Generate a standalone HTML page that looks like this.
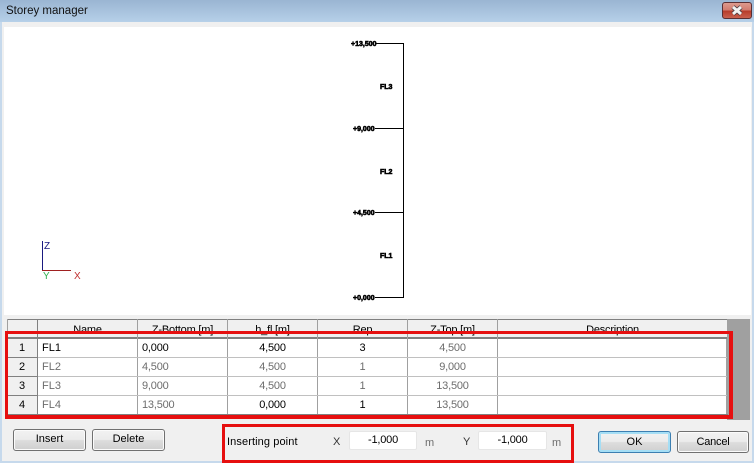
<!DOCTYPE html>
<html><head><meta charset="utf-8"><style>
html,body{margin:0;padding:0;background:#f0f0f0}
#w{position:relative;width:754px;height:463px;overflow:hidden;background:#f0f0f0;font-family:"Liberation Sans",sans-serif;font-size:11px;color:#000}
#w div{position:absolute;box-sizing:border-box}
.t{white-space:nowrap;line-height:14px}
.n{letter-spacing:-.2px}
.c{text-align:center}
.btn{border:1px solid #707070;border-radius:3px;background:linear-gradient(#f2f2f2 0,#ebebeb 48%,#dddddd 52%,#cfcfcf 100%);text-align:center;line-height:19px;box-shadow:inset 0 0 0 1px #fbfbfb}
.inp{background:#fff;border:1px solid #e6e6e6;border-radius:2px;height:19px;text-align:center;line-height:17px;width:68px}
.g{color:#6d6d6d}
.hl{background:#a0a0a0}
.hd{background:#f0f0f0}
</style></head><body><div id="w">
<div style="left:0;top:0;width:754px;height:22px;background:linear-gradient(#9ab5d2,#b6d0e8)"></div>
<div style="left:0;top:22px;width:2px;height:441px;background:#c6d9ec"></div>
<div style="left:752px;top:22px;width:2px;height:441px;background:#c6d9ec"></div>
<div style="left:0;top:461px;width:754px;height:2px;background:#c6d9ec"></div>
<div class="t" style="left:6px;top:4px;font-size:11.5px;color:#111">Storey manager</div>
<div style="left:722px;top:2px;width:30px;height:17px;border:1px solid #5a2f33;border-radius:3px;background:linear-gradient(#dd9a8e 0,#d27d70 45%,#b83d2c 55%,#c9604e 100%)"></div>
<svg style="position:absolute;left:722px;top:2px" width="30" height="17"><path d="M11 5L19 12M19 5L11 12" stroke="#4a3a40" stroke-width="4.500"/><path d="M11 5L19 12M19 5L11 12" stroke="#f2f2f2" stroke-width="3"/></svg>

<div style="left:4px;top:27px;width:747px;height:288px;background:#fff"></div>
<svg style="position:absolute;left:0;top:0" width="754" height="320">
<path d="M375 43.500H403.500V297.500H375M375 128.500H403.500M375 212.500H403.500" fill="none" stroke="#000" stroke-width="1"/>
<g font-family="Liberation Sans" font-weight="bold" font-size="7" fill="#000" stroke="#000" stroke-width=".6">
<text x="351" y="46">+13,500</text><text x="353" y="131">+9,000</text><text x="353" y="215">+4,500</text><text x="353" y="300">+0,000</text>
<text x="380" y="89">FL3</text><text x="380" y="174">FL2</text><text x="380" y="258">FL1</text></g>
<path d="M42.500 241V271" stroke="#1a1a80" stroke-width="1"/>
<path d="M42 270.500H71" stroke="#a02020" stroke-width="1"/>
<g font-family="Liberation Sans" font-size="10"><text x="44" y="249" fill="#1a1a80">Z</text><text x="43" y="279" fill="#30b050">Y</text><text x="74" y="279" fill="#c03030">X</text></g>
</svg>

<div style="left:727px;top:319px;width:23px;height:101px;background:#a0a0a0"></div>
<div style="left:7px;top:319px;width:720px;height:96px;background:#fff;border:1px solid #a0a0a0"></div>
<div class="hd" style="left:7px;top:319px;width:720px;height:19px;border-top:1px solid #808080"></div>
<div style="left:7px;top:338px;width:30px;height:76px;background:#f0f0f0"></div>
<div style="left:7px;top:337px;width:720px;height:2px;background:#808080"></div>
<div class="hl" style="left:7px;top:319px;width:1px;height:96px"></div>
<div style="left:37px;top:319px;width:1px;height:96px;background:#808080"></div>
<div class="hl" style="left:137px;top:319px;width:1px;height:95px"></div>
<div class="hl" style="left:227px;top:319px;width:1px;height:95px"></div>
<div class="hl" style="left:317px;top:319px;width:1px;height:95px"></div>
<div class="hl" style="left:407px;top:319px;width:1px;height:95px"></div>
<div class="hl" style="left:497px;top:319px;width:1px;height:95px"></div>
<div class="hl" style="left:727px;top:319px;width:1px;height:96px"></div>
<div style="left:38px;top:357px;width:689px;height:1px;background:#c0c0c0"></div>
<div style="left:38px;top:376px;width:689px;height:1px;background:#c0c0c0"></div>
<div style="left:38px;top:395px;width:689px;height:1px;background:#c0c0c0"></div>
<div style="left:7px;top:357px;width:30px;height:1px;background:#808080"></div>
<div style="left:7px;top:376px;width:30px;height:1px;background:#808080"></div>
<div style="left:7px;top:395px;width:30px;height:1px;background:#808080"></div>
<div style="left:7px;top:414px;width:721px;height:1px;background:#808080"></div>

<div class="t c n" style="left:38px;top:323px;width:99px">Name</div>
<div class="t c n" style="left:138px;top:323px;width:89px">Z-Bottom [m]</div>
<div class="t c n" style="left:228px;top:323px;width:89px">h_fl [m]</div>
<div class="t c n" style="left:318px;top:323px;width:89px">Rep</div>
<div class="t c n" style="left:408px;top:323px;width:89px">Z-Top [m]</div>
<div class="t c n" style="left:498px;top:323px;width:229px">Description</div>

<div class="t c" style="left:7px;top:341px;width:30px">1</div>
<div class="t c" style="left:7px;top:360px;width:30px">2</div>
<div class="t c" style="left:7px;top:379px;width:30px">3</div>
<div class="t c" style="left:7px;top:398px;width:30px">4</div>

<div class="t" style="left:42px;top:341px">FL1</div>
<div class="t g" style="left:42px;top:360px">FL2</div>
<div class="t g" style="left:42px;top:379px">FL3</div>
<div class="t g" style="left:42px;top:398px">FL4</div>

<div class="t n" style="left:142px;top:341px">0,000</div>
<div class="t g n" style="left:142px;top:360px">4,500</div>
<div class="t g n" style="left:142px;top:379px">9,000</div>
<div class="t g n" style="left:142px;top:398px">13,500</div>

<div class="t c n" style="left:228px;top:341px;width:89px">4,500</div>
<div class="t c g n" style="left:228px;top:360px;width:89px">4,500</div>
<div class="t c g n" style="left:228px;top:379px;width:89px">4,500</div>
<div class="t c n" style="left:228px;top:398px;width:89px">0,000</div>

<div class="t c" style="left:318px;top:341px;width:89px">3</div>
<div class="t c g" style="left:318px;top:360px;width:89px">1</div>
<div class="t c g" style="left:318px;top:379px;width:89px">1</div>
<div class="t c" style="left:318px;top:398px;width:89px">1</div>

<div class="t c g n" style="left:408px;top:341px;width:89px">4,500</div>
<div class="t c g n" style="left:408px;top:360px;width:89px">9,000</div>
<div class="t c g n" style="left:408px;top:379px;width:89px">13,500</div>
<div class="t c g n" style="left:408px;top:398px;width:89px">13,500</div>

<div style="left:5px;top:331px;width:728px;height:88px;border:3px solid #e60f0f;border-bottom-width:4px;border-right-width:4px"></div>

<div class="btn" style="left:13px;top:429px;width:73px;height:22px">Insert</div>
<div class="btn" style="left:92px;top:429px;width:73px;height:22px">Delete</div>

<div style="left:222px;top:424px;width:352px;height:39px;border:3px solid #e60f0f"></div>
<div class="t" style="left:227px;top:435px;letter-spacing:.1px">Inserting point</div>
<div class="t" style="left:333px;top:435px;color:#333">X</div>
<div class="inp n" style="left:349px;top:431px">-1,000</div>
<div class="t g" style="left:425px;top:436px">m</div>
<div class="t" style="left:463px;top:435px;color:#333">Y</div>
<div class="inp n" style="left:478px;top:431px;width:69px">-1,000</div>
<div class="t g" style="left:552px;top:436px">m</div>

<div class="btn" style="left:598px;top:431px;width:73px;height:22px;border-color:#3c7fb1;box-shadow:inset 0 0 0 2px #a5def5;line-height:20px">OK</div>
<div class="btn n" style="left:677px;top:431px;width:72px;height:22px;line-height:20px">Cancel</div>
</div></body></html>
